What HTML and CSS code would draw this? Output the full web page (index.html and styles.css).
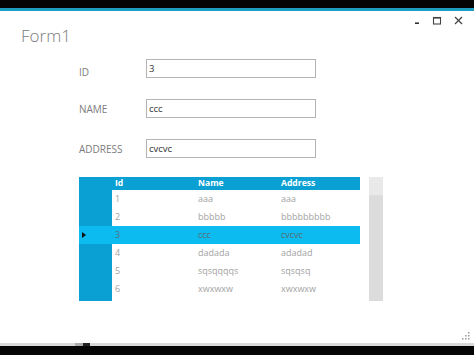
FILE: index.html
```html
<!DOCTYPE html>
<html>
<head>
<meta charset="utf-8">
<link rel="stylesheet" href="styles.css">
</head>
<body>
<div class="screen">
  <div class="topbar"></div>
  <div class="accent"></div>
  <div class="window">
    <div class="titlebar">
      <div class="title">Form1</div>
      <svg class="controls" width="52" height="10" viewBox="0 0 52 10">
        <line x1="2" y1="7.2" x2="6" y2="7.2" stroke="#333" stroke-width="1.6"/>
        <rect x="20.5" y="1.5" width="7" height="6.5" fill="none" stroke="#444" stroke-width="1.1"/>
        <line x1="20" y1="1.8" x2="28" y2="1.8" stroke="#444" stroke-width="1.6"/>
        <line x1="42" y1="1" x2="49" y2="8" stroke="#444" stroke-width="1.2"/>
        <line x1="49" y1="1" x2="42" y2="8" stroke="#444" stroke-width="1.2"/>
      </svg>
    </div>
    <div class="form">
      <div class="field"><span class="label label-id">ID</span><div class="input">3</div></div>
      <div class="field"><span class="label">NAME</span><div class="input">ccc</div></div>
      <div class="field"><span class="label">ADDRESS</span><div class="input">cvcvc</div></div>
    </div>
    <div class="gridwrap">
      <div class="grid">
        <div class="row head"><div class="rh"></div><div class="cell">Id</div><div class="cell">Name</div><div class="cell">Address</div></div>
        <div class="row"><div class="rh"></div><div class="cell">1</div><div class="cell">aaa</div><div class="cell">aaa</div></div>
        <div class="row"><div class="rh"></div><div class="cell">2</div><div class="cell">bbbbb</div><div class="cell">bbbbbbbbb</div></div>
        <div class="row sel"><div class="rh"><span class="arrow"></span></div><div class="cell">3</div><div class="cell">ccc</div><div class="cell">cvcvc</div></div>
        <div class="row"><div class="rh"></div><div class="cell">4</div><div class="cell">dadada</div><div class="cell">adadad</div></div>
        <div class="row"><div class="rh"></div><div class="cell">5</div><div class="cell">sqsqqqqs</div><div class="cell">sqsqsq</div></div>
        <div class="row"><div class="rh"></div><div class="cell">6</div><div class="cell">xwxwxw</div><div class="cell">xwxwxw</div></div>
        <div class="row filler"><div class="rh"></div><div class="cell"></div><div class="cell"></div><div class="cell"></div></div>
      </div>
      <div class="scrollbar"><div class="thumbtop"></div></div>
    </div>
    <svg class="grip" width="8" height="9" viewBox="0 0 8 9">
      <rect x="6" y="0" width="1.5" height="1.5" fill="#999"/>
      <rect x="3" y="3" width="1.5" height="1.5" fill="#999"/>
      <rect x="6" y="3" width="1.5" height="1.5" fill="#999"/>
      <rect x="0" y="6" width="1.5" height="1.5" fill="#999"/>
      <rect x="3" y="6" width="1.5" height="1.5" fill="#999"/>
      <rect x="6" y="6" width="1.5" height="1.5" fill="#999"/>
    </svg>
  </div>
  <div class="band"><span class="played"></span><span class="knob"></span></div>
  <div class="bottombar"></div>
</div>
</body>
</html>
```

FILE: styles.css
```css
html, body {
  margin: 0;
  padding: 0;
  background: #000;
}
.screen {
  width: 474px;
  height: 355px;
  overflow: hidden;
  display: flex;
  flex-direction: column;
  font-family: "Open Sans", "Liberation Sans", sans-serif;
}
.topbar {
  height: 8px;
  background: #050505;
}
.accent {
  height: 3px;
  background: #1c9fc3;
}
.window {
  height: 332px;
  background: #fff;
  display: flex;
  flex-direction: column;
}
.titlebar {
  height: 37px;
  display: flex;
  justify-content: space-between;
  align-items: flex-start;
}
.title {
  padding: 15px 0 0 21px;
  font-size: 17px;
  line-height: 20px;
  font-weight: 300;
  color: #7a7a7a;
}
.controls {
  margin: 5px 9px 0 0;
}
.form {
  margin: 11px 0 0 79px;
  display: flex;
  flex-direction: column;
  gap: 21px;
}
.field {
  display: flex;
  align-items: center;
  height: 19px;
}
.label {
  width: 67px;
  font-size: 10px;
  color: #7c7c7c;
}
.label-id {
  padding-top: 6px;
}
.input {
  box-sizing: border-box;
  width: 170px;
  height: 19px;
  border: 1px solid #b4b4b4;
  padding-left: 2px;
  font-size: 9.5px;
  line-height: 17px;
  color: #333;
}
.gridwrap {
  margin: 19px 0 0 79px;
  display: flex;
  gap: 9px;
  height: 124px;
}
.grid {
  width: 281px;
  display: flex;
  flex-direction: column;
}
.row {
  display: grid;
  grid-template-columns: 33px 83px 83px 82px;
  height: 18px;
  font-size: 9px;
  line-height: 18px;
  color: #a3a3a3;
}
.row .rh {
  background: #0aa0d4;
  display: flex;
  align-items: center;
}
.row .cell {
  background: #fff;
  padding-left: 3px;
  white-space: nowrap;
}
.row.head {
  height: 13px;
  line-height: 13px;
  font-weight: 700;
  font-size: 8.6px;
  color: #fff;
}
.row.head .cell {
  background: #0aa0d4;
}
.row.sel .rh,
.row.sel .cell {
  background: #0cbcf1;
  color: #5a6c76;
}
.row.filler {
  height: 3px;
}
.arrow {
  width: 0;
  height: 0;
  margin-left: 3px;
  border-top: 3px solid transparent;
  border-bottom: 3px solid transparent;
  border-left: 4px solid #111;
}
.scrollbar {
  width: 14px;
  background: #dcdcdc;
}
.thumbtop {
  height: 18px;
  background: #e9e9e9;
}
.grip {
  margin: auto 4px 2px auto;
}
.band {
  height: 3px;
  background: #d9d9d9;
  display: flex;
  padding-left: 75px;
}
.played {
  width: 8px;
  background: #ababab;
}
.knob {
  width: 7px;
  background: #222;
}
.bottombar {
  height: 9px;
  background: #050505;
}
```
